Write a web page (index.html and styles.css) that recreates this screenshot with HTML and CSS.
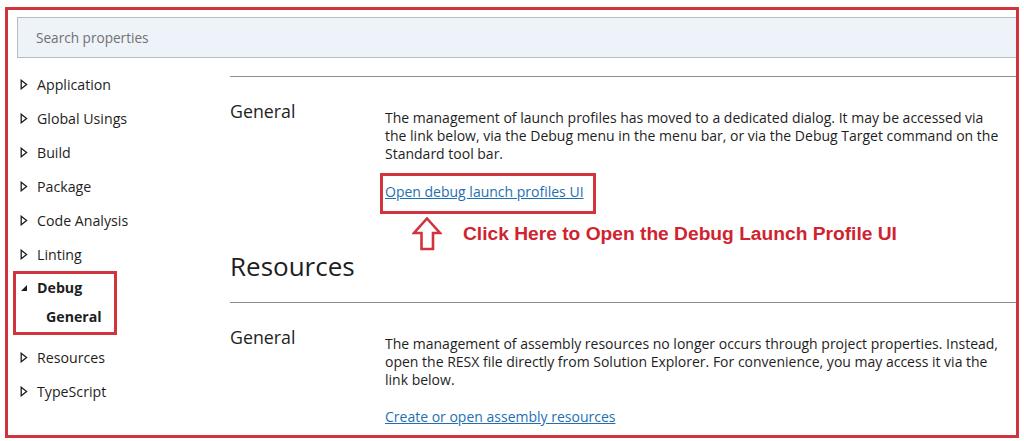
FILE: index.html
```html
<!DOCTYPE html>
<html lang="en">
<head>
<meta charset="utf-8">
<title>Project properties</title>
<link rel="stylesheet" href="styles.css">
</head>
<body>
<div class="frame">
  <div class="search">Search properties</div>
  <div class="main">
    <nav class="sidebar">
      <div class="item"><svg class="tri" viewBox="0 0 8 11"><path d="M1.2 1.2 L6.6 5.5 L1.2 9.8 Z"/></svg>Application</div>
      <div class="item"><svg class="tri" viewBox="0 0 8 11"><path d="M1.2 1.2 L6.6 5.5 L1.2 9.8 Z"/></svg>Global Usings</div>
      <div class="item"><svg class="tri" viewBox="0 0 8 11"><path d="M1.2 1.2 L6.6 5.5 L1.2 9.8 Z"/></svg>Build</div>
      <div class="item"><svg class="tri" viewBox="0 0 8 11"><path d="M1.2 1.2 L6.6 5.5 L1.2 9.8 Z"/></svg>Package</div>
      <div class="item"><svg class="tri" viewBox="0 0 8 11"><path d="M1.2 1.2 L6.6 5.5 L1.2 9.8 Z"/></svg>Code Analysis</div>
      <div class="item"><svg class="tri" viewBox="0 0 8 11"><path d="M1.2 1.2 L6.6 5.5 L1.2 9.8 Z"/></svg>Linting</div>
      <div class="group">
        <div class="item sub-head"><svg class="tri open" viewBox="0 0 8 11"><path d="M7 3 L7 9 L1 9 Z"/></svg>Debug</div>
        <div class="item sub-item">General</div>
      </div>
      <div class="item"><svg class="tri" viewBox="0 0 8 11"><path d="M1.2 1.2 L6.6 5.5 L1.2 9.8 Z"/></svg>Resources</div>
      <div class="item"><svg class="tri" viewBox="0 0 8 11"><path d="M1.2 1.2 L6.6 5.5 L1.2 9.8 Z"/></svg>TypeScript</div>
    </nav>
    <div class="content">
      <div class="rule first"></div>
      <div class="section">
        <div class="label">General</div>
        <div class="body">
          <p class="desc">The management of launch profiles has moved to a dedicated dialog. It may be accessed via<br>the link below, via the Debug menu in the menu bar, or via the Debug Target command on the<br>Standard tool bar.</p>
          <div class="link-box"><a href="#" class="link">Open debug launch profiles UI</a></div>
        </div>
      </div>
      <h2 class="heading">Resources</h2>
      <div class="rule second-rule"></div>
      <div class="section">
        <div class="label">General</div>
        <div class="body">
          <p class="desc">The management of assembly resources no longer occurs through project properties. Instead,<br>open the RESX file directly from Solution Explorer. For convenience, you may access it via the<br>link below.</p>
          <a href="#" class="link solo">Create or open assembly resources</a>
        </div>
      </div>
    </div>
  </div>
  <div class="callout">
    <svg class="arrow" viewBox="0 0 30 34"><path d="M15 1.5 L28 16 L21 16 L21 32 L9.5 32 L9.5 16 L2 16 Z"/></svg>
    <span class="callout-text">Click Here to Open the Debug Launch Profile UI</span>
  </div>
</div>
</body>
</html>
```

FILE: styles.css
```css
html, body {
  margin: 0;
  padding: 0;
  background: #ffffff;
}

body {
  font-family: "Open Sans", "Noto Sans", "DejaVu Sans", sans-serif;
  color: #1e1e1e;
}

.frame {
  position: relative;
  box-sizing: border-box;
  margin: 7px 0 0 5px;
  width: 1014px;
  height: 431px;
  border: 3px solid #d1343d;
  overflow: hidden;
  padding: 7px 0 0 9px;
}

.search {
  box-sizing: border-box;
  width: 1020px;
  height: 41px;
  background: #eef2f9;
  border: 1px solid #b8bcc4;
  padding-left: 18px;
  font-size: 13.6px;
  line-height: 39px;
  color: #717171;
}

.main {
  display: flex;
  margin-top: 10px;
}

.sidebar {
  width: 217px;
  flex: none;
  font-size: 14.2px;
  margin: -1px 0 0 -4px;
}

.item {
  display: flex;
  align-items: center;
  height: 34px;
  padding-left: 7px;
}

.tri {
  width: 8px;
  height: 11px;
  margin-right: 9px;
  flex: none;
}

.tri path {
  fill: none;
  stroke: #1e1e1e;
  stroke-width: 1.3;
  stroke-linejoin: miter;
}

.tri.open path {
  fill: #1e1e1e;
  stroke: none;
}

.group {
  box-sizing: border-box;
  width: 104px;
  height: 64px;
  border: 3px solid #d1343d;
  margin-bottom: 5px;
}

.group .item {
  padding-left: 4px;
}

.group .sub-head {
  height: 26px;
}

.group .sub-item {
  height: 32px;
  padding-left: 30px;
}

.sub-head, .sub-item {
  font-weight: 700;
}

.content {
  flex: 1;
  min-width: 0;
}

.rule {
  height: 1px;
  background: #8c8c8c;
  margin-right: -20px;
}

.rule.first {
  margin-top: 8px;
}

.rule.second-rule {
  margin-top: 20px;
}

.section {
  display: grid;
  grid-template-columns: 155px 1fr;
  padding-top: 22px;
}

.label {
  font-size: 17.8px;
  line-height: 24px;
  color: #1e1e1e;
}

.desc {
  margin: 10px 0 0;
  font-size: 14px;
  line-height: 18px;
  white-space: nowrap;
  color: #1e1e1e;
}

.link {
  font-size: 14px;
  line-height: 18px;
  color: #1f6fb2;
  text-decoration: underline;
  white-space: nowrap;
}

.link-box {
  display: block;
  box-sizing: border-box;
  margin: 10px 0 0 -5px;
  width: 216px;
  height: 41px;
  border: 3px solid #d1343d;
  padding: 6px 0 0 2px;
  line-height: 18px;
}

.heading {
  margin: 36px 0 0;
  font-size: 26px;
  line-height: 32px;
  font-weight: 400;
  color: #1e1e1e;
}

.link.solo {
  display: inline-block;
  margin-top: 19px;
}

.callout {
  position: absolute;
  left: 404px;
  top: 207px;
  display: flex;
  align-items: center;
}

.arrow {
  width: 30px;
  height: 34px;
}

.arrow path {
  fill: #ffffff;
  stroke: #d1343d;
  stroke-width: 2.6;
  stroke-linejoin: miter;
}

.callout-text {
  margin-left: 21px;
  font-family: "Liberation Sans", Arial, sans-serif;
  font-weight: 700;
  font-size: 19.2px;
  color: #d0232f;
  white-space: nowrap;
}
```
